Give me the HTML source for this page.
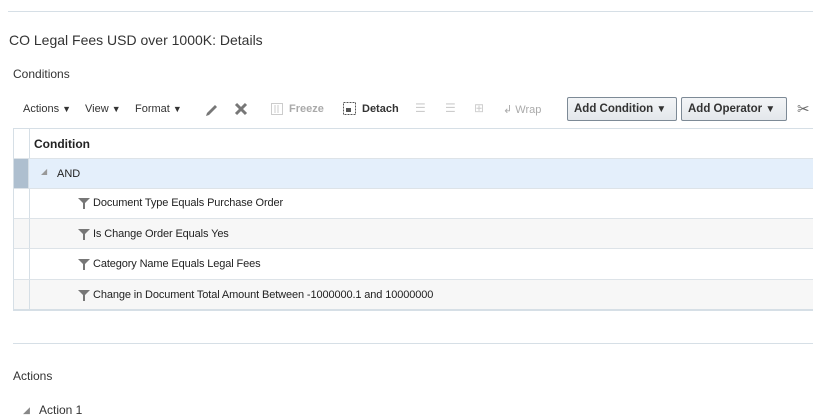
<!DOCTYPE html>
<html><head><meta charset="utf-8"><style>
body{margin:0;width:813px;height:416px;overflow:hidden;background:#fff;font-family:"Liberation Sans",Arial,sans-serif;color:#333;position:relative}
.a{position:absolute;white-space:nowrap}
.hr{position:absolute;left:13px;right:0;height:1px;background:#d6dfe6}
.tb{font-size:11px;color:#333}
.dis{color:#aaa;font-weight:bold}
.btn{position:absolute;top:97px;height:24px;border:1px solid #7d8a96;border-radius:2px;background:linear-gradient(#f3f5f7,#e3e7eb);font-size:11.5px;font-weight:bold;color:#333;line-height:22px;padding:0 6px;box-sizing:border-box;white-space:nowrap;overflow:hidden}
.row{position:absolute;left:13px;right:0;border-bottom:1px solid #dde3e8;box-sizing:border-box}
.rh{position:absolute;left:0;top:0;bottom:0;width:15px;border-right:1px solid #d6dfe6}
.txt{position:absolute;left:79px;font-size:11px;color:#222;letter-spacing:-0.12px;white-space:nowrap}
.fun{position:absolute;left:64px;width:12px;height:11px}
</style></head><body>
<div class="hr" style="left:8px;top:11px"></div>
<div class="a" style="left:9px;top:32px;font-size:14px;color:#333">CO Legal Fees USD over 1000K: Details</div>
<div class="a" style="left:13px;top:67px;font-size:12px">Conditions</div>

<div class="a tb" style="left:23px;top:103px">Actions <span style="font-size:9px">▼</span></div>
<div class="a tb" style="left:85px;top:103px">View <span style="font-size:9px">▼</span></div>
<div class="a tb" style="left:135px;top:103px">Format <span style="font-size:9px">▼</span></div>
<svg class="a" style="left:204px;top:102px" width="16" height="16"><path d="M2 14 L3 11 L11 3 L13 5 L5 13 Z" fill="#777"/></svg>
<svg class="a" style="left:234px;top:102px" width="14" height="14"><path d="M2 2 L12 12 M12 2 L2 12" stroke="#777" stroke-width="3"/></svg>
<svg class="a" style="left:271px;top:103px" width="12" height="12"><rect x="0.5" y="0.5" width="11" height="11" fill="none" stroke="#ccc"/><path d="M4 2v8M7 2v8" stroke="#ccc"/></svg>
<div class="a dis" style="left:289px;top:103px;font-size:11px">Freeze</div>
<svg class="a" style="left:343px;top:102px" width="13" height="13"><rect x="0.5" y="0.5" width="12" height="12" fill="none" stroke="#555" stroke-dasharray="2 1"/><rect x="3" y="6" width="5" height="4" fill="#555"/></svg>
<div class="a" style="left:362px;top:103px;font-size:11px;font-weight:bold;color:#333">Detach</div>
<div class="a" style="left:415px;top:101px;font-size:12px;color:#ccc">☰</div>
<div class="a" style="left:445px;top:101px;font-size:12px;color:#ccc">☰</div>
<div class="a" style="left:474px;top:101px;font-size:12px;color:#ccc">⊞</div>
<div class="a dis" style="left:503px;top:103px;font-size:11px;font-weight:normal">↲ Wrap</div>
<div class="btn" style="left:567px;width:110px">Add Condition <span style="font-size:10px">▼</span></div>
<div class="btn" style="left:681px;width:106px">Add Operator <span style="font-size:10px">▼</span></div>
<div class="a" style="left:797px;top:100px;font-size:15px;color:#666">✂</div>

<div style="position:absolute;left:13px;right:0;top:128px;height:1px;background:#d6dfe6"></div>
<div class="row" style="top:129px;height:30px;border-left:1px solid #d6dfe6"><div class="rh"></div><div class="a" style="left:20px;top:8px;font-size:12px;font-weight:bold;color:#222">Condition</div></div>
<div class="row" style="top:159px;height:30px;background:#e4effb;border-left:1px solid #d6dfe6"><div class="rh" style="background:#aebfcf;width:14px"></div><div class="a" style="left:27px;top:8px;font-size:8px;color:#999">◢</div><div class="a" style="left:43px;top:9px;font-size:11px;color:#222">AND</div></div>
<div class="row" style="top:189px;height:30px;border-left:1px solid #d6dfe6"><div class="rh"></div><svg class="fun" style="top:9px"><path d="M0 0H12L7 5V11H5V5Z" fill="#777"/></svg><div class="txt" style="top:8px">Document Type Equals Purchase Order</div></div>
<div class="row" style="top:219px;height:30px;background:#f7f7f7;border-left:1px solid #d6dfe6"><div class="rh"></div><svg class="fun" style="top:10px"><path d="M0 0H12L7 5V11H5V5Z" fill="#777"/></svg><div class="txt" style="top:9px">Is Change Order Equals Yes</div></div>
<div class="row" style="top:249px;height:31px;border-left:1px solid #d6dfe6"><div class="rh"></div><svg class="fun" style="top:10px"><path d="M0 0H12L7 5V11H5V5Z" fill="#777"/></svg><div class="txt" style="top:9px">Category Name Equals Legal Fees</div></div>
<div class="row" style="top:280px;height:31px;background:#f7f7f7;border-left:1px solid #d6dfe6;border-bottom:2px solid #d6dfe6"><div class="rh"></div><svg class="fun" style="top:10px"><path d="M0 0H12L7 5V11H5V5Z" fill="#777"/></svg><div class="txt" style="top:9px">Change in Document Total Amount Between -1000000.1 and 10000000</div></div>

<div class="hr" style="top:343px"></div>
<div class="a" style="left:13px;top:369px;font-size:12px">Actions</div>
<div class="a" style="left:23px;top:405px;font-size:9px;color:#888">◢</div>
<div class="a" style="left:39px;top:403px;font-size:12px">Action 1</div>
</body></html>
